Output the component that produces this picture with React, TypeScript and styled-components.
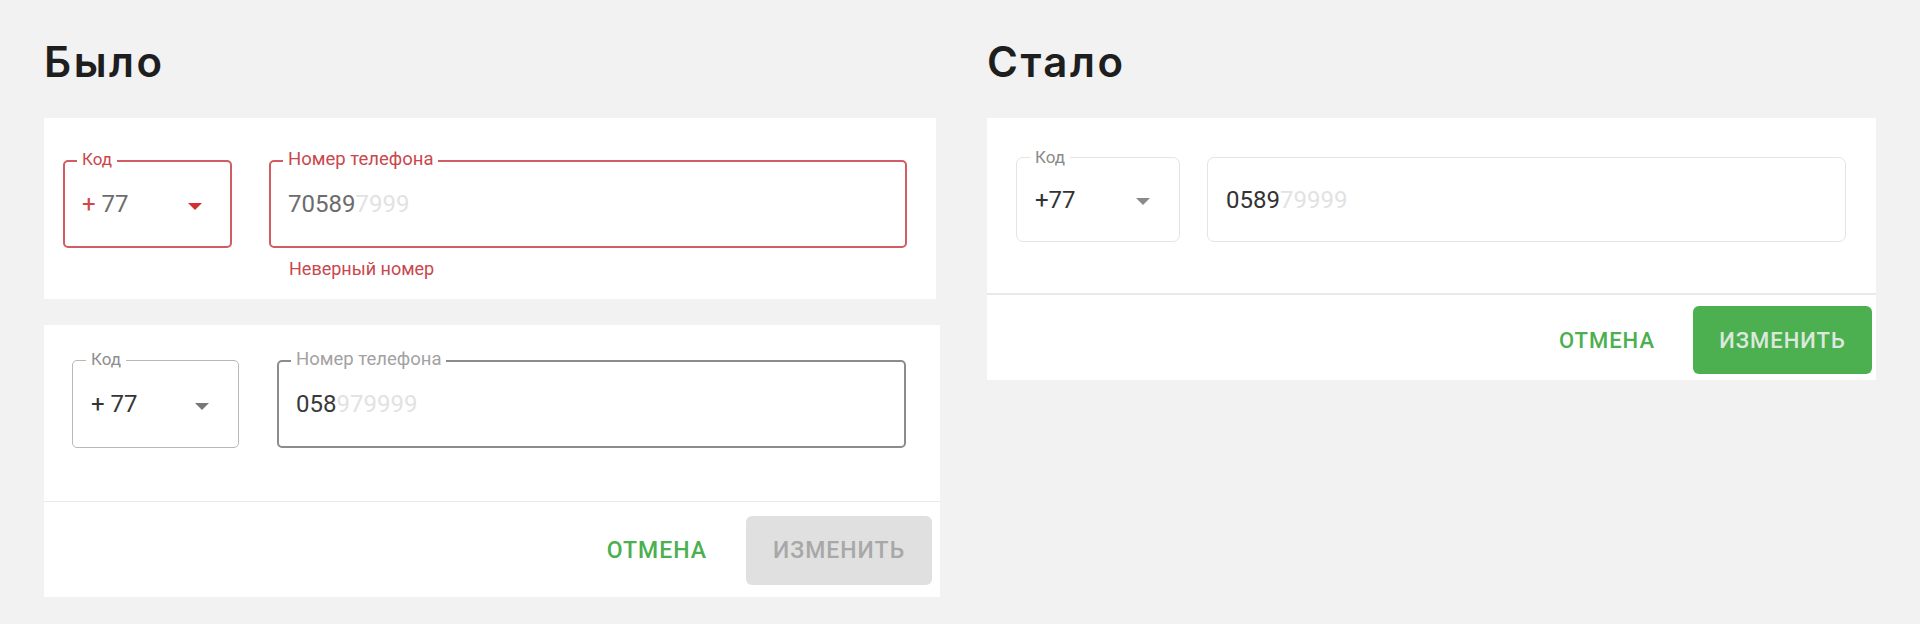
import * as React from 'react';
import styled, { createGlobalStyle } from 'styled-components';

type Tone = 'error' | 'idle' | 'hover' | 'soft';

const tones: Record<Tone, { border: string; bw: number; radius: number; label: string; value: string; arrow: string }> = {
    error: { border: '#cf5d63', bw: 2, radius: 5, label: '#c9474e', value: '#6c6c6c', arrow: '#d32f2f' },
    idle: { border: '#b8b8b8', bw: 1, radius: 5, label: '#8e8e8e', value: '#353535', arrow: '#777777' },
    hover: { border: '#8c8c8c', bw: 2, radius: 5, label: '#a2a2a2', value: '#3a3a3a', arrow: '#777777' },
    soft: { border: '#e4e4e4', bw: 1, radius: 7, label: '#8a8a8a', value: '#333333', arrow: '#8a8a8a' }
};

const GlobalStyle = createGlobalStyle`
    html, body {
        margin: 0;
        padding: 0;
        background: #f2f2f2;
    }
    body {
        font-family: Roboto, 'Liberation Sans', sans-serif;
    }
    * {
        box-sizing: border-box;
    }
`;

const Page = styled.div`
    display: grid;
    grid-template-columns: 896px 889px;
    column-gap: 47px;
    align-items: start;
    padding: 41px 0 0 44px;
    min-height: 624px;
`;

const Column = styled.div`
    display: flex;
    flex-direction: column;
    align-items: flex-start;
`;

const Title = styled.h1`
    margin: 0 0 35px 0;
    font-family: Inter, 'Noto Sans', sans-serif;
    font-size: 42px;
    line-height: 42px;
    font-weight: 600;
    letter-spacing: 2.5px;
    color: #1e1e1e;
`;

const Card = styled.div<{ $width: number; $mt?: number }>`
    width: ${p => p.$width}px;
    margin-top: ${p => p.$mt || 0}px;
    background: #ffffff;
`;

const Body = styled.div<{ $pad: string; $gap: number }>`
    display: flex;
    align-items: flex-start;
    gap: ${p => p.$gap}px;
    padding: ${p => p.$pad};
`;

const FieldColumn = styled.div`
    flex: 1;
    display: flex;
    flex-direction: column;
`;

const Box = styled.div<{ $tone: Tone; $w?: number; $h: number; $grow?: boolean }>`
    position: relative;
    display: flex;
    align-items: center;
    justify-content: space-between;
    flex: ${p => (p.$grow ? '1 1 0' : '0 0 auto')};
    width: ${p => (p.$w ? `${p.$w}px` : '100%')};
    height: ${p => p.$h}px;
    padding: 0 ${p => 30 - tones[p.$tone].bw}px 0 ${p => 19 - tones[p.$tone].bw}px;
    border: ${p => tones[p.$tone].bw}px solid ${p => tones[p.$tone].border};
    border-radius: ${p => tones[p.$tone].radius}px;
    color: ${p => tones[p.$tone].value};
`;

const Label = styled.span<{ $tone: Tone; $size: number; $shift?: number }>`
    position: absolute;
    left: ${p => 14 - tones[p.$tone].bw}px;
    top: ${p => -p.$size / 2 - tones[p.$tone].bw / 2 - tones[p.$tone].bw + (p.$shift || 0)}px;
    padding: 0 5px;
    background: #ffffff;
    color: ${p => tones[p.$tone].label};
    font-size: ${p => p.$size}px;
    line-height: ${p => p.$size}px;
    white-space: nowrap;
`;

const Value = styled.span`
    font-size: 24px;
    line-height: 28px;
    white-space: nowrap;
`;

const Plus = styled.span<{ $color?: string }>`
    color: ${p => p.$color || 'inherit'};
`;

const Masked = styled.span`
    color: #e2e2e2;
`;

const Helper = styled.div`
    margin: 12px 0 0 20px;
    font-size: 18px;
    line-height: 18px;
    color: #c9474e;
`;

const Footer = styled.div<{ $pad: string; $gap: number; $line: number }>`
    display: flex;
    justify-content: flex-end;
    align-items: center;
    gap: ${p => p.$gap}px;
    padding: ${p => p.$pad};
    border-top: ${p => p.$line}px solid #e9e9e9;
`;

const TextButton = styled.button<{ $size: number; $h: number }>`
    height: ${p => p.$h}px;
    padding: 0 18px;
    border: 0;
    background: transparent;
    color: #4caf50;
    font-family: Roboto, 'Liberation Sans', sans-serif;
    font-weight: 500;
    font-size: ${p => p.$size}px;
    letter-spacing: 1px;
    text-transform: uppercase;
    cursor: pointer;
`;

const FilledButton = styled.button<{ $size: number; $w: number; $h: number; $off?: boolean }>`
    width: ${p => p.$w}px;
    height: ${p => p.$h}px;
    border: 0;
    border-radius: 6px;
    background: ${p => (p.$off ? '#e0e0e0' : '#4caf50')};
    color: ${p => (p.$off ? '#a8a8a8' : '#dbe9dc')};
    font-family: Roboto, 'Liberation Sans', sans-serif;
    font-weight: 500;
    font-size: ${p => p.$size}px;
    letter-spacing: 1px;
    text-transform: uppercase;
    cursor: pointer;
`;

const Arrow = ({ color }: { color: string }) => (
    <svg width="14" height="7" viewBox="0 0 14 7" style={{ marginTop: 4 }}>
        <polygon points="0,0 14,0 7,7" fill={color} />
    </svg>
);

export default function App() {
    return (
        <>
            <GlobalStyle />
            <Page>
                <Column>
                    <Title>Было</Title>

                    <Card $width={892}>
                        <Body $pad="42px 29px 21px 19px" $gap={37}>
                            <Box $tone="error" $w={169} $h={88}>
                                <Label $tone="error" $size={17}>Код</Label>
                                <Value>
                                    <Plus $color="#d0454c">+</Plus> 77
                                </Value>
                                <Arrow color={tones.error.arrow} />
                            </Box>
                            <FieldColumn>
                                <Box $tone="error" $h={88}>
                                    <Label $tone="error" $size={18.5}>Номер телефона</Label>
                                    <Value>
                                        70589<Masked>7999</Masked>
                                    </Value>
                                </Box>
                                <Helper>Неверный номер</Helper>
                            </FieldColumn>
                        </Body>
                    </Card>

                    <Card $width={896} $mt={26}>
                        <Body $pad="35px 34px 53px 28px" $gap={38}>
                            <Box $tone="idle" $w={167} $h={88}>
                                <Label $tone="idle" $size={17}>Код</Label>
                                <Value>+ 77</Value>
                                <Arrow color={tones.idle.arrow} />
                            </Box>
                            <Box $tone="hover" $h={88} $grow>
                                <Label $tone="hover" $size={18.5}>Номер телефона</Label>
                                <Value>
                                    058<Masked>979999</Masked>
                                </Value>
                            </Box>
                        </Body>
                        <Footer $pad="14px 8px 12px" $gap={21} $line={1}>
                            <TextButton $size={23} $h={69}>Отмена</TextButton>
                            <FilledButton $off $size={23} $w={186} $h={69}>Изменить</FilledButton>
                        </Footer>
                    </Card>
                </Column>

                <Column>
                    <Title>Стало</Title>

                    <Card $width={889}>
                        <Body $pad="39px 30px 51px 29px" $gap={27}>
                            <Box $tone="soft" $w={164} $h={85}>
                                <Label $tone="soft" $size={17} $shift={1}>Код</Label>
                                <Value>+77</Value>
                                <Arrow color={tones.soft.arrow} />
                            </Box>
                            <Box $tone="soft" $h={85} $grow>
                                <Value>
                                    0589<Masked>79999</Masked>
                                </Value>
                            </Box>
                        </Body>
                        <Footer $pad="11px 4px 6px" $gap={20} $line={2}>
                            <TextButton $size={22} $h={68}>Отмена</TextButton>
                            <FilledButton $size={22} $w={179} $h={68}>Изменить</FilledButton>
                        </Footer>
                    </Card>
                </Column>
            </Page>
        </>
    );
}
